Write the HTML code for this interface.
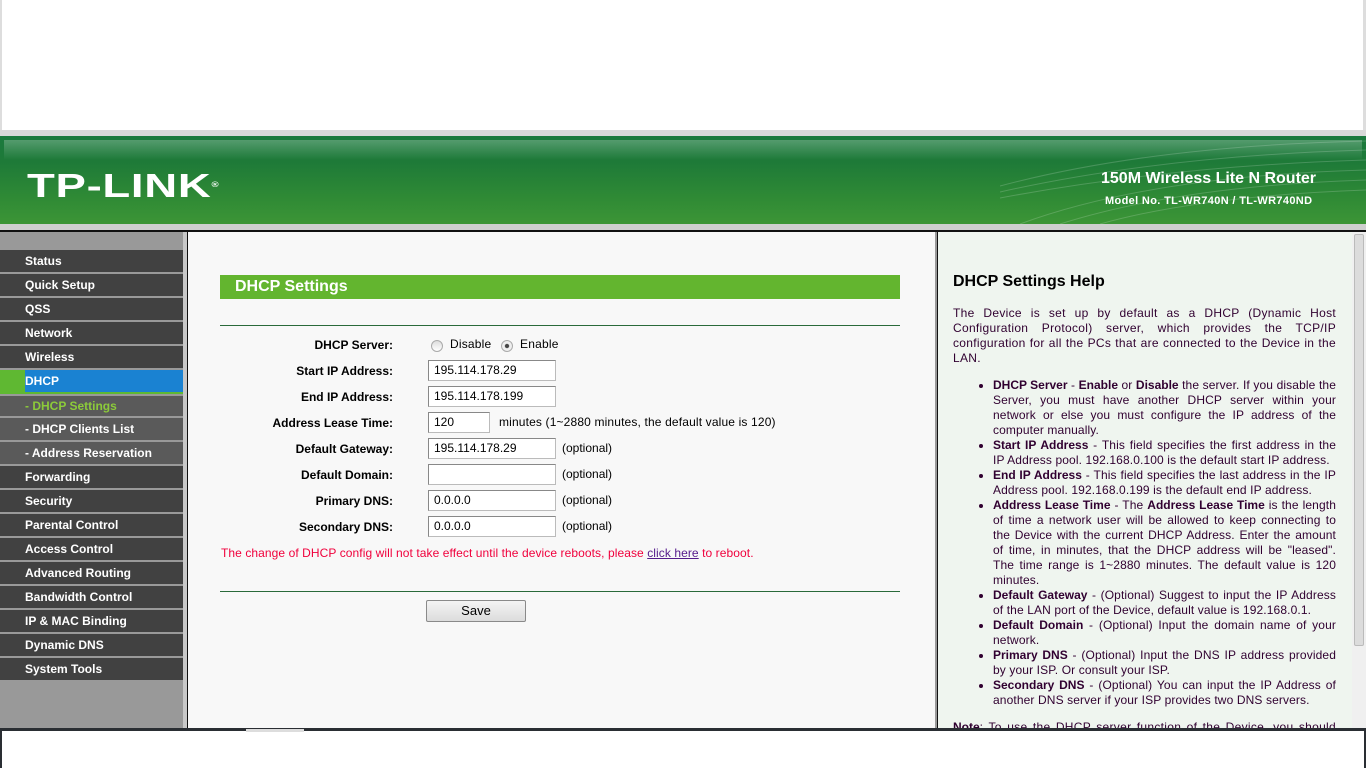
<!DOCTYPE html>
<html><head><meta charset="utf-8"><style>
*{margin:0;padding:0;box-sizing:border-box}
body{width:1366px;height:768px;overflow:hidden;background:#fff;font-family:"Liberation Sans",Arial,sans-serif;position:relative}
.a{position:absolute}
.menu div{position:absolute;left:0;width:183px;height:22px;background:#414141;color:#fff;font-weight:bold;font-size:12px;line-height:22px;padding-left:25px}
.menu div.sub{background:#5a5a5a}
.lbl{position:absolute;right:973px;font-size:12px;font-weight:bold;color:#000;text-align:right;white-space:nowrap}
.inp{position:absolute;left:428px;width:128px;height:21px;background:#fff;border:1px solid #bbb;border-top-color:#888;border-left-color:#888;font-size:12px;line-height:19px;padding-left:5px}
.opt{position:absolute;left:562px;font-size:12px;color:#000}
.help{font-size:12px;color:#300030;line-height:15px;text-align:justify}
.help p{letter-spacing:0.3px}
.help ul{letter-spacing:0.12px}
.help b{letter-spacing:0}
</style></head><body>
<div class="a" style="left:0;top:0;width:1366px;height:130px;background:#fff;border-left:2px solid #ddd;border-right:3px solid #ddd"></div>
<div class="a" style="left:0;top:130px;width:1366px;height:6px;background:#d9d9d9"></div>
<div class="a" style="left:0;top:136px;width:1366px;height:88px;background:linear-gradient(#1b7a3e 0,#1e7a38 30%,#2f8a35 70%,#3c9536 100%)"></div>
<div class="a" style="left:4px;top:140px;width:1358px;height:20px;background:linear-gradient(rgba(255,255,255,.25),rgba(255,255,255,0))"></div>
<svg class="a" style="left:1000px;top:136px" width="366" height="88"><g fill="none" stroke="rgba(255,255,255,.18)" stroke-width="1">
<path d="M0 50 Q150 10 366 5"/><path d="M0 56 Q160 20 366 14"/><path d="M0 62 Q170 30 366 24"/><path d="M20 88 Q150 40 366 34"/><path d="M60 88 Q180 50 366 44"/><path d="M100 88 Q200 60 366 54"/></g></svg>
<div class="a" style="left:27px;top:168px;color:#fff;font-weight:bold;font-size:33px;letter-spacing:0.5px;transform:scaleX(1.38);transform-origin:left;line-height:36px">TP-LINK<span style="font-size:7px;vertical-align:top">®</span></div>
<div class="a" style="left:1101px;top:170px;color:#fff;font-weight:bold;font-size:16px">150M Wireless Lite N Router</div>
<div class="a" style="left:1105px;top:195px;color:#fff;font-weight:bold;font-size:11px;letter-spacing:0.35px">Model No. TL-WR740N / TL-WR740ND</div>
<div class="a" style="left:0;top:224px;width:1366px;height:6px;background:#cfcfcf"></div>
<div class="a" style="left:0;top:230px;width:1366px;height:2px;background:#111"></div>
<div class="a" style="left:0;top:232px;width:183px;height:496px;background:#999"></div>
<div class="a" style="left:183px;top:232px;width:4px;height:496px;background:#c8c8c8"></div>
<div class="a" style="left:187px;top:232px;width:1px;height:496px;background:#111"></div>
<div class="menu">
<div style="top:250px">Status</div>
<div style="top:274px">Quick Setup</div>
<div style="top:298px">QSS</div>
<div style="top:322px">Network</div>
<div style="top:346px">Wireless</div>
<div style="top:370px;background:linear-gradient(90deg,#5fb832 25px,#1a82d2 25px);border-bottom:2px solid #5fb832;height:24px">DHCP</div>
<div class="sub" style="top:396px;color:#8ccb3a;height:20px;line-height:20px">- DHCP Settings</div>
<div class="sub" style="top:418px">- DHCP Clients List</div>
<div class="sub" style="top:442px">- Address Reservation</div>
<div style="top:466px">Forwarding</div>
<div style="top:490px">Security</div>
<div style="top:514px">Parental Control</div>
<div style="top:538px">Access Control</div>
<div style="top:562px">Advanced Routing</div>
<div style="top:586px">Bandwidth Control</div>
<div style="top:610px">IP &amp; MAC Binding</div>
<div style="top:634px">Dynamic DNS</div>
<div style="top:658px">System Tools</div>
</div>
<div class="a" style="left:188px;top:232px;width:747px;height:496px;background:#f8f8f8"></div>
<div class="a" style="left:935px;top:232px;width:2px;height:496px;background:#999"></div>
<div class="a" style="left:937px;top:232px;width:1px;height:496px;background:#111"></div>
<div class="a" style="left:220px;top:275px;width:680px;height:24px;background:#63b52f;color:#fff;font-weight:bold;font-size:16px;line-height:24px;padding-left:15px">DHCP Settings</div>
<div class="a" style="left:220px;top:325px;width:680px;height:1px;background:#2a6a3a"></div>
<div class="lbl" style="top:338px">DHCP Server:</div>
<div class="a" style="left:431px;top:340px;width:12px;height:12px;border-radius:50%;border:1px solid #aaa;background:linear-gradient(#ddd,#fff)"></div>
<div class="a" style="left:450px;top:337px;font-size:12px;letter-spacing:0.2px">Disable</div>
<div class="a" style="left:501px;top:340px;width:12px;height:12px;border-radius:50%;border:1px solid #aaa;background:radial-gradient(#444 25%,#eee 35%)"></div>
<div class="a" style="left:520px;top:337px;font-size:12px;letter-spacing:0.2px">Enable</div>
<div class="lbl" style="top:364px">Start IP Address:</div><div class="inp" style="top:360px">195.114.178.29</div>
<div class="lbl" style="top:390px">End IP Address:</div><div class="inp" style="top:386px">195.114.178.199</div>
<div class="lbl" style="top:416px">Address Lease Time:</div><div class="inp" style="top:412px;width:62px">120</div>
<div class="a" style="left:499px;top:415px;font-size:12px;letter-spacing:0.15px">minutes (1~2880 minutes, the default value is 120)</div>
<div class="lbl" style="top:442px">Default Gateway:</div><div class="inp" style="top:438px">195.114.178.29</div><div class="opt" style="top:441px">(optional)</div>
<div class="lbl" style="top:468px">Default Domain:</div><div class="inp" style="top:464px"></div><div class="opt" style="top:467px">(optional)</div>
<div class="lbl" style="top:494px">Primary DNS:</div><div class="inp" style="top:490px">0.0.0.0</div><div class="opt" style="top:493px">(optional)</div>
<div class="lbl" style="top:520px">Secondary DNS:</div><div class="inp" style="top:516px">0.0.0.0</div><div class="opt" style="top:519px">(optional)</div>
<div class="a" style="left:221px;top:546px;font-size:12px;color:#f0003c;letter-spacing:0.08px">The change of DHCP config will not take effect until the device reboots, please <span style="color:#551a8b;text-decoration:underline">click here</span> to reboot.</div>
<div class="a" style="left:220px;top:591px;width:680px;height:1px;background:#2a6a3a"></div>
<div class="a" style="left:426px;top:600px;width:100px;height:22px;border:1px solid #8a8a8a;border-radius:2px;background:linear-gradient(#f4f4f4,#dcdcdc);font-size:13px;text-align:center;line-height:20px">Save</div>
<div class="a" style="left:938px;top:232px;width:414px;height:496px;background:#eff5ef"></div>
<div class="a" style="left:1352px;top:232px;width:14px;height:496px;background:#f0f0f0"></div>
<div class="a" style="left:1354px;top:234px;width:10px;height:412px;background:#dcdcdc;border:1px solid #bbb;border-radius:2px"></div>
<div class="a" style="left:953px;top:273px;font-size:16px;font-weight:bold;color:#000">DHCP Settings Help</div>
<div class="a" style="left:953px;top:306px;width:383px;height:422px;overflow:hidden">
<div class="help">
<p>The Device is set up by default as a DHCP (Dynamic Host Configuration Protocol) server, which provides the TCP/IP configuration for all the PCs that are connected to the Device in the LAN.</p>
<ul style="margin-top:12px;padding-left:40px">
<li><b>DHCP Server</b> - <b>Enable</b> or <b>Disable</b> the server. If you disable the Server, you must have another DHCP server within your network or else you must configure the IP address of the computer manually.</li>
<li><b>Start IP Address</b> - This field specifies the first address in the IP Address pool. 192.168.0.100 is the default start IP address.</li>
<li><b>End IP Address</b> - This field specifies the last address in the IP Address pool. 192.168.0.199 is the default end IP address.</li>
<li><b>Address Lease Time</b> - The <b>Address Lease Time</b> is the length of time a network user will be allowed to keep connecting to the Device with the current DHCP Address. Enter the amount of time, in minutes, that the DHCP address will be "leased". The time range is 1~2880 minutes. The default value is 120 minutes.</li>
<li><b>Default Gateway</b> - (Optional) Suggest to input the IP Address of the LAN port of the Device, default value is 192.168.0.1.</li>
<li><b>Default Domain</b> - (Optional) Input the domain name of your network.</li>
<li><b>Primary DNS</b> - (Optional) Input the DNS IP address provided by your ISP. Or consult your ISP.</li>
<li><b>Secondary DNS</b> - (Optional) You can input the IP Address of another DNS server if your ISP provides two DNS servers.</li>
</ul>
<p style="margin-top:12px"><b><u>Note</u></b>: To use the DHCP server function of the Device, you should configure all computers on the LAN.</p>
</div></div>
<div class="a" style="left:0;top:728px;width:1366px;height:3px;background:#2a2e33"></div>
<div class="a" style="left:0;top:731px;width:1366px;height:37px;background:#fff;border-left:2px solid #2a2e33;border-right:2px solid #2a2e33"></div>
<div class="a" style="left:246px;top:729px;width:58px;height:3px;background:#ddd"></div>
</body></html>
